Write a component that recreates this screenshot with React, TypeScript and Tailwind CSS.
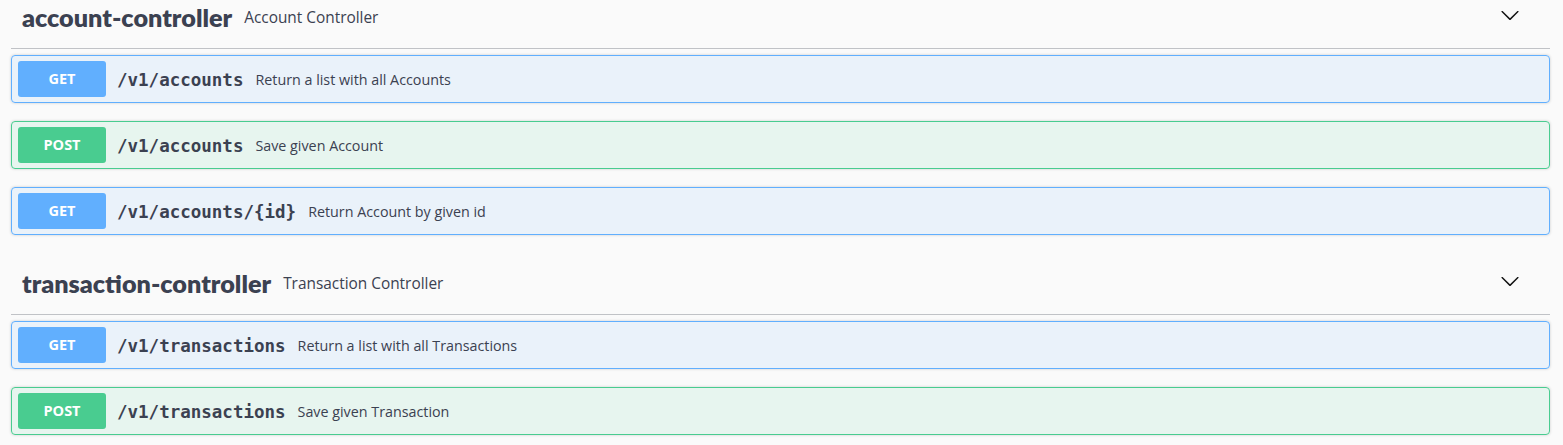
import React from 'react';

type Op = { method: 'GET' | 'POST'; path: string; summary: string };

const sections: { name: string; description: string; ops: Op[] }[] = [
  {
    name: 'account-controller',
    description: 'Account Controller',
    ops: [
      { method: 'GET', path: '/v1/accounts', summary: 'Return a list with all Accounts' },
      { method: 'POST', path: '/v1/accounts', summary: 'Save given Account' },
      { method: 'GET', path: '/v1/accounts/{id}', summary: 'Return Account by given id' },
    ],
  },
  {
    name: 'transaction-controller',
    description: 'Transaction Controller',
    ops: [
      { method: 'GET', path: '/v1/transactions', summary: 'Return a list with all Transactions' },
      { method: 'POST', path: '/v1/transactions', summary: 'Save given Transaction' },
    ],
  },
];

function Chevron() {
  return (
    <svg width="20" height="20" viewBox="0 0 20 20" className="fill-[#111]">
      <path d="M17.418 6.109c.272-.268.709-.268.979 0s.271.701 0 .969l-7.908 7.83c-.27.268-.707.268-.979 0l-7.908-7.83c-.27-.268-.27-.701 0-.969.271-.268.709-.268.979 0L10 13.25l7.418-7.141z" />
    </svg>
  );
}

function Operation({ op }: { op: Op }) {
  const get = op.method === 'GET';
  return (
    <div
      className={
        get
          ? 'flex h-[48px] items-center rounded-[4px] border border-[#61affe] bg-[#61affe]/10 pl-[6px] pr-[5px] shadow-[0_0_3px_rgba(0,0,0,0.19)]'
          : 'flex h-[48px] items-center rounded-[4px] border border-[#49cc90] bg-[#49cc90]/10 pl-[6px] pr-[5px] shadow-[0_0_3px_rgba(0,0,0,0.19)]'
      }
    >
      <div
        className={
          get
            ? 'flex h-[36px] w-[88px] items-center justify-center rounded-[3px] bg-[#61affe] text-[14.5px] font-bold text-white'
            : 'flex h-[36px] w-[88px] items-center justify-center rounded-[3px] bg-[#49cc90] text-[14.5px] font-bold text-white'
        }
        style={{ fontFamily: '"Open Sans", sans-serif' }}
      >
        {op.method}
      </div>
      <span
        className="ml-[11px] mt-[2px] text-[17.5px] font-bold text-[#3b4151]"
        style={{ fontFamily: '"DejaVu Sans Mono", monospace' }}
      >
        {op.path}
      </span>
      <span
        className="ml-[12px] mt-[2px] text-[14.3px] text-[#3b4151]"
        style={{ fontFamily: '"Open Sans", sans-serif' }}
      >
        {op.summary}
      </span>
    </div>
  );
}

export default function App() {
  return (
    <div className="min-h-screen bg-[#fafafa] pl-[11px] pr-[13px]">
      {sections.map((s, i) => (
        <section key={s.name} className={i === 0 ? '' : 'mt-[31px]'}>
          <div className="flex h-[49px] items-start border-b border-[#3b4151]/30">
            <h4
              className="ml-[11px] pt-[5px] text-[25.2px] font-extrabold leading-none text-[#3b4151]"
              style={{ fontFamily: 'Lato, sans-serif' }}
            >
              {s.name}
            </h4>
            <small
              className="ml-[12px] pt-[10px] text-[15.4px] leading-none text-[#3b4151]"
              style={{ fontFamily: '"Open Sans", sans-serif' }}
            >
              {s.description}
            </small>
            <div className="ml-auto mr-[30px] pt-[5px]">
              <Chevron />
            </div>
          </div>
          <div className="mt-[6px] flex flex-col gap-[18px]">
            {s.ops.map((op) => (
              <Operation key={op.method + op.path} op={op} />
            ))}
          </div>
        </section>
      ))}
    </div>
  );
}
